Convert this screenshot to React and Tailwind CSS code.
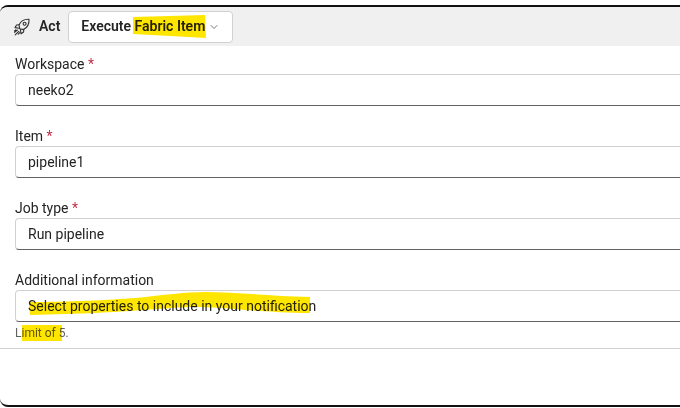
import React from 'react';
import { ChevronDown } from 'lucide-react';

const fields = [
  { label: 'Workspace', value: 'neeko2', required: true },
  { label: 'Item', value: 'pipeline1', required: true },
  { label: 'Job type', value: 'Run pipeline', required: true },
  { label: 'Additional information', value: 'Select properties to include in your notification' },
];

const RocketIcon = () => (
  <svg width="18" height="18" viewBox="0 0 18 18" fill="none" stroke="#303030" strokeWidth="1.1" strokeLinecap="round" strokeLinejoin="round">
    <path d="M6 7 C7.5 3.5 11.5 1 16 1.2 C16.3 5.8 14 9.8 10.5 11.6 L6.8 10.8 Z" />
    <circle cx="11.6" cy="5.8" r="1.5" />
    <path d="M6.2 6.8 L3.6 7 L2 9.6 L6.2 10.2" />
    <path d="M10.8 11.4 L10.6 14 L8 15.8 L7.4 11.6" />
    <path d="M4.4 12 L1.6 14.4 M5.8 13.4 L2.2 16.8 M2.8 11.8 L1.4 13 M6.8 14.6 L5.2 16.2" />
  </svg>
);

const Field = ({ label, value, required }) => (
  <div className="h-[72px]">
    <div className="h-[20px] leading-[20px] text-[14px] text-[#242424]">
      {label}
      {required && <span className="text-[#c4314b]"> *</span>}
    </div>
    <div className="h-[32px] -mr-[20px] pl-[12px] pt-[1px] flex items-center bg-white text-[14px] text-[#242424] rounded-[4px] border border-[#d1d1d1] border-b-[#616161]">
      {value}
    </div>
  </div>
);

export default function App() {
  return (
    <div className="relative w-[680px] h-[408px] overflow-hidden bg-white pt-[5px] font-['Roboto','Noto_Sans',sans-serif]">
      <div className="h-[402px] rounded-l-[8px] border-y-2 border-[#111] overflow-hidden">
        <div className="h-[39px] bg-[#f0f0f0] flex items-center pl-[13px]">
          <RocketIcon />
          <span className="ml-[8px] text-[14px] font-semibold text-[#242424]">Act</span>
          <div className="ml-[8px] w-[165px] h-[32px] pl-[12px] flex items-center gap-[3px] bg-white rounded-[4px] border border-[#d1d1d1] text-[14px] font-semibold text-[#242424]">
            Execute Fabric Item
            <ChevronDown size={12} strokeWidth={1.4} className="text-[#424242]" />
          </div>
        </div>
        <div className="pl-[15px] pt-[8px]">
          {fields.map((f) => (
            <Field key={f.label} {...f} />
          ))}
        </div>
        <div className="-mt-[20px] pl-[15px] h-[26px] leading-[22px] text-[12px] text-[#616161]">Limit of 5.</div>
        <div className="border-t border-[#d1d1d1]" />
      </div>

      {/* marker highlights drawn over the screenshot */}
      <svg className="absolute left-0 top-0 mix-blend-multiply pointer-events-none" width="680" height="408">
        <path d="M133 17 L205 15 L206 38 L170 36 L133 34 Z" fill="#ffe600" />
        <path d="M29 302 C70 302 110 300 135 298 C165 295 185 292 205 292 C235 292 270 296 310 297 L310 313 C285 313 265 311 245 310 C225 308 210 307 195 307 C165 307 135 313 30 315 Z" fill="#ffe600" />
        <path d="M22 325 H62 V341 H22 Z" fill="#ffe600" />
      </svg>
    </div>
  );
}
